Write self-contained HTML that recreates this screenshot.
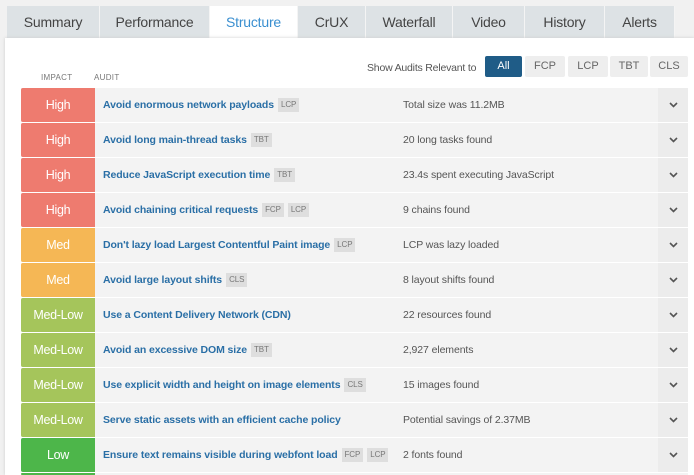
<!DOCTYPE html>
<html><head><style>
*{margin:0;padding:0;box-sizing:border-box}
html,body{width:694px;height:475px;overflow:hidden}
body{background:#f1f1f1;font-family:"Liberation Sans",sans-serif;position:relative}
.tabs{position:absolute;top:6px;left:7px;height:33px;display:flex}
.tab{height:33px;background:#dde2e5;border-right:1px solid #f4f4f4;color:#444;font-size:14px;line-height:33px;text-align:center;letter-spacing:-.2px}
.tab.on{background:#fff;color:#3a8fd0}
.panel{position:absolute;top:38px;left:5px;right:0;bottom:0;background:#fff;box-shadow:0 0 3px #ccc}
.hdr{position:absolute;top:73px;font-size:8px;color:#777;letter-spacing:.3px}
.show{position:absolute;top:62px;left:367px;font-size:10.5px;color:#555;letter-spacing:-.2px}
.fb{position:absolute;top:56px;height:21px;background:#eeeeee;color:#666;font-size:11px;line-height:21px;text-align:center;border-radius:2px}
.fb.on{background:#1f5c87;color:#fff}
.row{position:absolute;left:21px;width:667px;height:34px;background:#f3f3f3}
.b{position:absolute;left:0;top:0;width:74px;height:34px;color:#fff;font-size:12.5px;line-height:34px;text-align:center;border-radius:2px 0 0 2px;letter-spacing:-.3px}
.t{position:absolute;left:82px;top:0;line-height:34px;font-size:10.5px;font-weight:bold;color:#2a6fa6;white-space:nowrap;letter-spacing:-.1px}
.tag{display:inline-block;background:#dedede;color:#777;font-weight:normal;font-size:8px;line-height:14px;padding:0 3px;margin-left:4px;vertical-align:1px}
.f{position:absolute;left:382px;top:0;line-height:34px;font-size:10.5px;color:#555;letter-spacing:-.1px}
.c{position:absolute;right:0;top:0;width:30px;height:34px;background:#ececec}
.c svg{position:absolute;left:11px;top:14px}
.H{background:#ee7b6f}.M{background:#f5b755}.ML{background:#a5c55b}.L{background:#4db64a}
</style></head><body>
<div class="tabs">
<div class="tab" style="width:93px">Summary</div>
<div class="tab" style="width:110px">Performance</div>
<div class="tab on" style="width:88px">Structure</div>
<div class="tab" style="width:68px">CrUX</div>
<div class="tab" style="width:87px">Waterfall</div>
<div class="tab" style="width:72px">Video</div>
<div class="tab" style="width:80px">History</div>
<div class="tab" style="width:70px">Alerts</div>
</div>
<div class="panel"></div>
<div class="hdr" style="left:41px">IMPACT</div>
<div class="hdr" style="left:94px">AUDIT</div>
<div class="show">Show Audits Relevant to</div>
<div class="fb on" style="left:485px;width:37px">All</div>
<div class="fb" style="left:525px;width:40px">FCP</div>
<div class="fb" style="left:568px;width:40px">LCP</div>
<div class="fb" style="left:610px;width:38px">TBT</div>
<div class="fb" style="left:650px;width:38px">CLS</div>

<div class="row" style="top:88px"><div class="b H">High</div><div class="t">Avoid enormous network payloads<span class="tag">LCP</span></div><div class="f">Total size was 11.2MB</div><div class="c"><svg width="9" height="6"><path d="M1 1L4.5 4.5L8 1" stroke="#555" stroke-width="1.6" fill="none"/></svg></div></div>
<div class="row" style="top:123px"><div class="b H">High</div><div class="t">Avoid long main-thread tasks<span class="tag">TBT</span></div><div class="f">20 long tasks found</div><div class="c"><svg width="9" height="6"><path d="M1 1L4.5 4.5L8 1" stroke="#555" stroke-width="1.6" fill="none"/></svg></div></div>
<div class="row" style="top:158px"><div class="b H">High</div><div class="t">Reduce JavaScript execution time<span class="tag">TBT</span></div><div class="f">23.4s spent executing JavaScript</div><div class="c"><svg width="9" height="6"><path d="M1 1L4.5 4.5L8 1" stroke="#555" stroke-width="1.6" fill="none"/></svg></div></div>
<div class="row" style="top:193px"><div class="b H">High</div><div class="t">Avoid chaining critical requests<span class="tag">FCP</span><span class="tag">LCP</span></div><div class="f">9 chains found</div><div class="c"><svg width="9" height="6"><path d="M1 1L4.5 4.5L8 1" stroke="#555" stroke-width="1.6" fill="none"/></svg></div></div>
<div class="row" style="top:228px"><div class="b M">Med</div><div class="t">Don't lazy load Largest Contentful Paint image<span class="tag">LCP</span></div><div class="f">LCP was lazy loaded</div><div class="c"><svg width="9" height="6"><path d="M1 1L4.5 4.5L8 1" stroke="#555" stroke-width="1.6" fill="none"/></svg></div></div>
<div class="row" style="top:263px"><div class="b M">Med</div><div class="t">Avoid large layout shifts<span class="tag">CLS</span></div><div class="f">8 layout shifts found</div><div class="c"><svg width="9" height="6"><path d="M1 1L4.5 4.5L8 1" stroke="#555" stroke-width="1.6" fill="none"/></svg></div></div>
<div class="row" style="top:298px"><div class="b ML">Med-Low</div><div class="t">Use a Content Delivery Network (CDN)</div><div class="f">22 resources found</div><div class="c"><svg width="9" height="6"><path d="M1 1L4.5 4.5L8 1" stroke="#555" stroke-width="1.6" fill="none"/></svg></div></div>
<div class="row" style="top:333px"><div class="b ML">Med-Low</div><div class="t">Avoid an excessive DOM size<span class="tag">TBT</span></div><div class="f">2,927 elements</div><div class="c"><svg width="9" height="6"><path d="M1 1L4.5 4.5L8 1" stroke="#555" stroke-width="1.6" fill="none"/></svg></div></div>
<div class="row" style="top:368px"><div class="b ML">Med-Low</div><div class="t">Use explicit width and height on image elements<span class="tag">CLS</span></div><div class="f">15 images found</div><div class="c"><svg width="9" height="6"><path d="M1 1L4.5 4.5L8 1" stroke="#555" stroke-width="1.6" fill="none"/></svg></div></div>
<div class="row" style="top:403px"><div class="b ML">Med-Low</div><div class="t">Serve static assets with an efficient cache policy</div><div class="f">Potential savings of 2.37MB</div><div class="c"><svg width="9" height="6"><path d="M1 1L4.5 4.5L8 1" stroke="#555" stroke-width="1.6" fill="none"/></svg></div></div>
<div class="row" style="top:438px"><div class="b L">Low</div><div class="t">Ensure text remains visible during webfont load<span class="tag">FCP</span><span class="tag">LCP</span></div><div class="f">2 fonts found</div><div class="c"><svg width="9" height="6"><path d="M1 1L4.5 4.5L8 1" stroke="#555" stroke-width="1.6" fill="none"/></svg></div></div>
<div class="row" style="top:473px;height:2px"><div class="b L" style="height:2px"></div></div>
</body></html>
